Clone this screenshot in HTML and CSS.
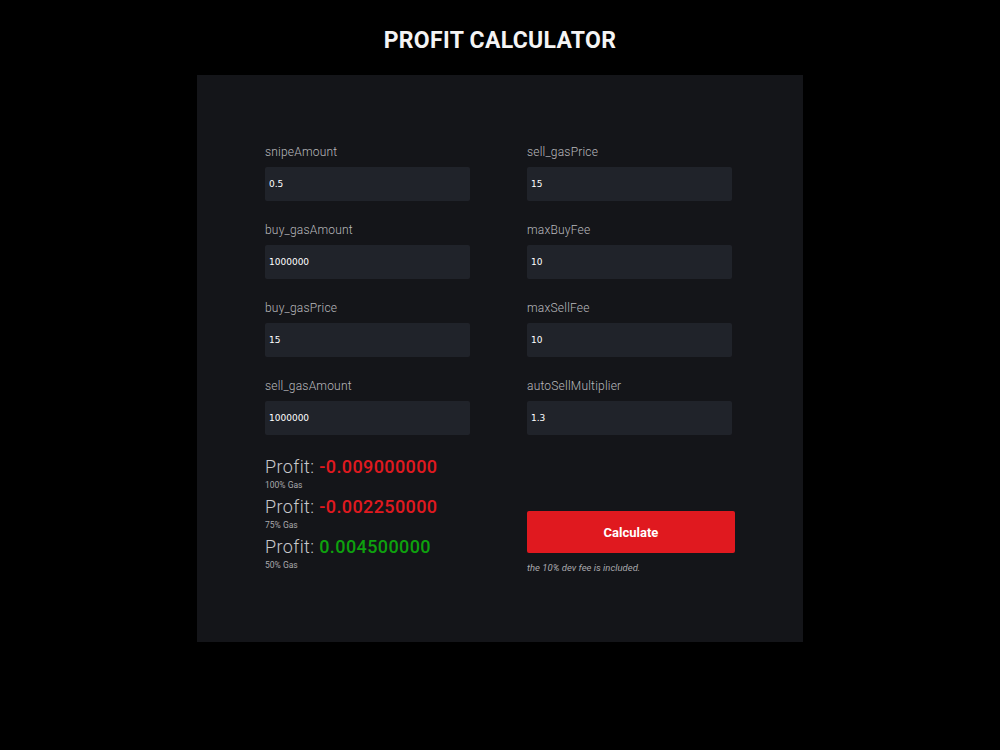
FILE: index.html
```html
<!DOCTYPE html>
<html lang="en">
<head>
    <meta charset="UTF-8">
    <title>Profit Calculator</title>
    <link rel="stylesheet" href="styles.css">
</head>
<body>

<h1 class="title">PROFIT CALCULATOR</h1>

<div class="card">
    <div class="fields">
        <div class="field">
            <label>snipeAmount</label>
            <input type="text" value="0.5">
        </div>
        <div class="field">
            <label>sell_gasPrice</label>
            <input type="text" value="15">
        </div>
        <div class="field">
            <label>buy_gasAmount</label>
            <input type="text" value="1000000">
        </div>
        <div class="field">
            <label>maxBuyFee</label>
            <input type="text" value="10">
        </div>
        <div class="field">
            <label>buy_gasPrice</label>
            <input type="text" value="15">
        </div>
        <div class="field">
            <label>maxSellFee</label>
            <input type="text" value="10">
        </div>
        <div class="field">
            <label>sell_gasAmount</label>
            <input type="text" value="1000000">
        </div>
        <div class="field">
            <label>autoSellMultiplier</label>
            <input type="text" value="1.3">
        </div>
    </div>

    <div class="bottom">
        <div class="results">
            <div class="result">
                <div class="profit">Profit: <span class="loss">-0.009000000</span></div>
                <div class="gas">100% Gas</div>
            </div>
            <div class="result">
                <div class="profit">Profit: <span class="loss">-0.002250000</span></div>
                <div class="gas">75% Gas</div>
            </div>
            <div class="result">
                <div class="profit">Profit: <span class="gain">0.004500000</span></div>
                <div class="gas">50% Gas</div>
            </div>
        </div>
        <div class="actions">
            <button class="calc-button">Calculate</button>
            <p class="note">the 10% dev fee is included.</p>
        </div>
    </div>
</div>

</body>
</html>
```

FILE: styles.css
```css
body {
    font-family: Roboto, "Noto Sans", sans-serif;
    background-color: #000;
    margin: 0;
    display: flex;
    flex-direction: column;
    align-items: center;
}

.title {
    margin: 27px 0 0;
    height: 48px;
    color: #f4f4f4;
    font-size: 23px;
    font-weight: bold;
    letter-spacing: 0.3px;
}

.card {
    width: 606px;
    height: 567px;
    box-sizing: border-box;
    background-color: #141519;
    padding: 70px 68px 0;
}

.fields {
    display: grid;
    grid-template-columns: 205px 205px;
    column-gap: 57px;
    row-gap: 22px;
}

.field {
    display: flex;
    flex-direction: column;
}

.field label {
    color: #b9b9bd;
    font-size: 12px;
    font-weight: 300;
    letter-spacing: 0.2px;
    height: 22px;
}

.field input {
    height: 34px;
    box-sizing: border-box;
    background-color: #20232a;
    border: none;
    border-radius: 2px;
    padding: 0 4px;
    color: #fff;
    font-family: "DejaVu Sans", sans-serif;
    font-size: 9px;
    outline: none;
}

.bottom {
    display: grid;
    grid-template-columns: 205px 208px;
    column-gap: 57px;
    margin-top: 21px;
}

.results {
    display: flex;
    flex-direction: column;
    gap: 5px;
}

.profit {
    color: #c9c9cc;
    font-size: 18px;
    font-weight: 300;
    letter-spacing: 0.4px;
    line-height: 22px;
}

.loss {
    color: #e0191f;
    font-weight: 500;
}

.gain {
    color: #0ea10e;
    font-weight: 500;
}

.gas {
    margin-top: 2px;
    color: #a9a9ad;
    font-size: 8.5px;
    line-height: 11px;
}

.actions {
    padding-top: 55px;
}

.calc-button {
    width: 208px;
    height: 42px;
    background-color: #e0191f;
    color: #fff;
    border: none;
    border-radius: 2px;
    font-family: Roboto, sans-serif;
    font-size: 13px;
    font-weight: bold;
    cursor: pointer;
}

.note {
    margin: 9px 0 0;
    color: #a9a9ad;
    font-size: 9.5px;
    font-style: italic;
}
```
